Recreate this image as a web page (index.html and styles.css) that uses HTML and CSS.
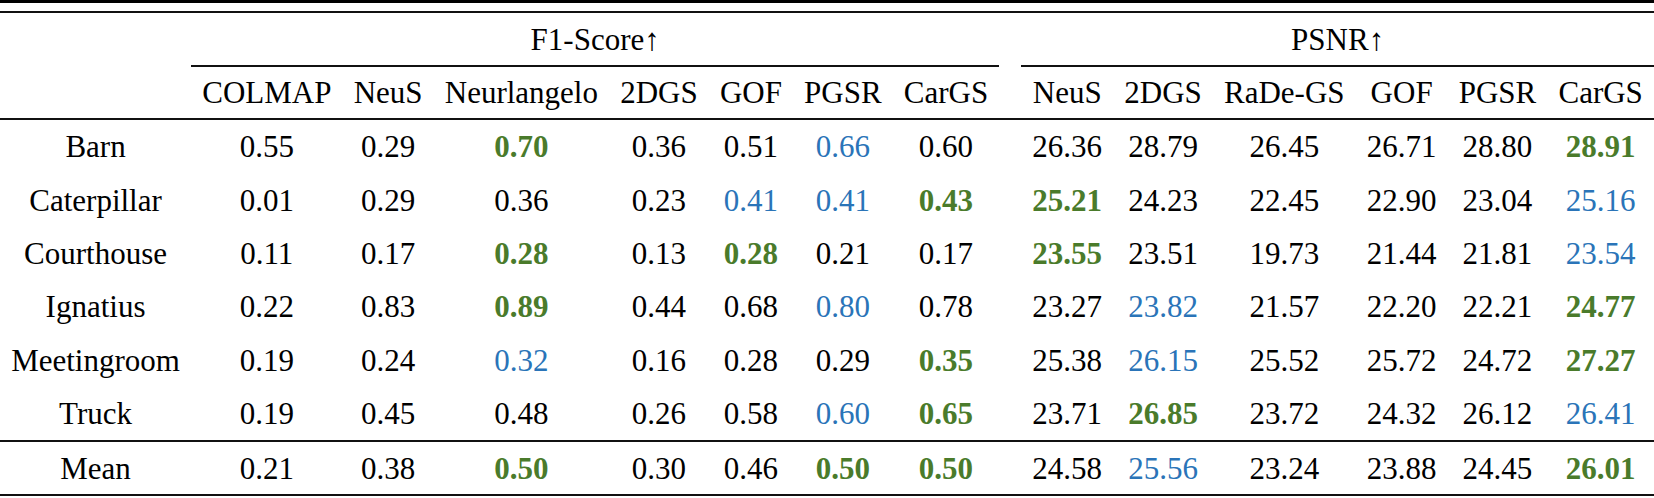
FILE: index.html
```html
<!DOCTYPE html>
<html>
<head>
<meta charset="utf-8">
<link rel="stylesheet" href="styles.css">
</head>
<body>
<div class="toprule"></div>
<table class="results">
  <thead>
    <tr class="group-row">
      <th class="label"></th>
      <th colspan="7" class="grp">F1-Score↑</th>
      <th class="gap"></th>
      <th colspan="6" class="grp">PSNR↑</th>
    </tr>
    <tr class="method-row">
      <th class="label"></th>
      <th>COLMAP</th><th>NeuS</th><th>Neurlangelo</th><th>2DGS</th><th>GOF</th><th>PGSR</th><th>CarGS</th>
      <th class="gap"></th>
      <th>NeuS</th><th>2DGS</th><th>RaDe-GS</th><th>GOF</th><th>PGSR</th><th>CarGS</th>
    </tr>
  </thead>
  <tbody>
    <tr>
      <td>Barn</td>
      <td>0.55</td><td>0.29</td><td class="best">0.70</td><td>0.36</td><td>0.51</td><td class="second">0.66</td><td>0.60</td>
      <td class="gap"></td>
      <td>26.36</td><td>28.79</td><td>26.45</td><td>26.71</td><td>28.80</td><td class="best">28.91</td>
    </tr>
    <tr>
      <td>Caterpillar</td>
      <td>0.01</td><td>0.29</td><td>0.36</td><td>0.23</td><td class="second">0.41</td><td class="second">0.41</td><td class="best">0.43</td>
      <td class="gap"></td>
      <td class="best">25.21</td><td>24.23</td><td>22.45</td><td>22.90</td><td>23.04</td><td class="second">25.16</td>
    </tr>
    <tr>
      <td>Courthouse</td>
      <td>0.11</td><td>0.17</td><td class="best">0.28</td><td>0.13</td><td class="best">0.28</td><td>0.21</td><td>0.17</td>
      <td class="gap"></td>
      <td class="best">23.55</td><td>23.51</td><td>19.73</td><td>21.44</td><td>21.81</td><td class="second">23.54</td>
    </tr>
    <tr>
      <td>Ignatius</td>
      <td>0.22</td><td>0.83</td><td class="best">0.89</td><td>0.44</td><td>0.68</td><td class="second">0.80</td><td>0.78</td>
      <td class="gap"></td>
      <td>23.27</td><td class="second">23.82</td><td>21.57</td><td>22.20</td><td>22.21</td><td class="best">24.77</td>
    </tr>
    <tr>
      <td>Meetingroom</td>
      <td>0.19</td><td>0.24</td><td class="second">0.32</td><td>0.16</td><td>0.28</td><td>0.29</td><td class="best">0.35</td>
      <td class="gap"></td>
      <td>25.38</td><td class="second">26.15</td><td>25.52</td><td>25.72</td><td>24.72</td><td class="best">27.27</td>
    </tr>
    <tr>
      <td>Truck</td>
      <td>0.19</td><td>0.45</td><td>0.48</td><td>0.26</td><td>0.58</td><td class="second">0.60</td><td class="best">0.65</td>
      <td class="gap"></td>
      <td>23.71</td><td class="best">26.85</td><td>23.72</td><td>24.32</td><td>26.12</td><td class="second">26.41</td>
    </tr>
    <tr class="mean-row">
      <td>Mean</td>
      <td>0.21</td><td>0.38</td><td class="best">0.50</td><td>0.30</td><td>0.46</td><td class="best">0.50</td><td class="best">0.50</td>
      <td class="gap"></td>
      <td>24.58</td><td class="second">25.56</td><td>23.24</td><td>23.88</td><td>24.45</td><td class="best">26.01</td>
    </tr>
  </tbody>
</table>
</body>
</html>
```
FILE: styles.css
```css
html, body {
  margin: 0;
  padding: 0;
  background: #ffffff;
}

body {
  font-family: "Liberation Serif", "Times New Roman", serif;
  font-size: 31px;
  color: #000000;
}

.toprule {
  height: 3px;
  background: #000000;
  margin-bottom: 8px;
}

.results {
  border-collapse: collapse;
  width: 1654px;
  border-top: 2px solid #111111;
  border-bottom: 2px solid #111111;
}

.results th,
.results td {
  padding: 0 11px;
  text-align: center;
  font-weight: normal;
  white-space: nowrap;
  line-height: 1;
  vertical-align: middle;
}

.results .gap {
  width: 0;
}

.group-row th {
  height: 52px;
}

.group-row .grp {
  border-bottom: 2px solid #111111;
}

.method-row {
  border-bottom: 2px solid #111111;
}

.method-row th {
  height: 51px;
}

.results tbody td {
  height: 53.4px;
}

.mean-row {
  border-top: 2px solid #111111;
}

.results tbody .mean-row td {
  height: 52px;
}

.best {
  color: #4a7b2b;
  font-weight: bold;
}

.results td.best {
  font-weight: bold;
}

.second {
  color: #2a74b8;
}
```
